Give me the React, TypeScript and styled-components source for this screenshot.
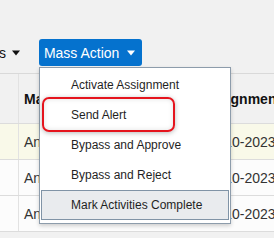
import React from 'react';
import styled, { createGlobalStyle } from 'styled-components';

const Global = createGlobalStyle`
  html, body { margin: 0; padding: 0; background: #f1f1f1; }
  body { font-family: "Liberation Sans", Arial, sans-serif; overflow: hidden; }
`;

const Page = styled.div`
  position: relative;
  width: 274px;
  height: 238px;
  overflow: hidden;
  background: #f1f1f1;
`;

const Toolbar = styled.div`
  display: flex;
  align-items: flex-start;
  gap: 19px;
  height: 73px;
  padding-top: 39px;
  box-sizing: border-box;
  margin-left: -40px;
`;

const TextMenuButton = styled.div`
  display: flex;
  align-items: center;
  gap: 6px;
  height: 27px;
  font-size: 14px;
  color: #111;
  white-space: nowrap;
`;

const PrimaryButton = styled.div`
  display: flex;
  align-items: center;
  gap: 8px;
  height: 27px;
  padding: 0 7px 0 5px;
  background: #0572ce;
  color: #fff;
  font-size: 14px;
  border-radius: 3px;
  white-space: nowrap;
`;

const Caret = ({ color }: { color: string }) => (
  <svg width="8" height="6" viewBox="0 0 8 6">
    <path d="M0 0.5 L8 0.5 L4 5.5 Z" fill={color} />
  </svg>
);

const Table = styled.div`
  display: flex;
  flex-direction: column;
  border-top: 1px solid #d9d9d9;
`;

const Row = styled.div<{ $bg: string; $h: number }>`
  display: grid;
  grid-template-columns: 19px 180px 1fr;
  height: ${(p) => p.$h}px;
  background: ${(p) => p.$bg};
  border-bottom: 1px solid #dcdcdc;
  box-sizing: border-box;
`;

const Cell = styled.div<{ $head?: boolean }>`
  display: flex;
  align-items: center;
  padding-left: ${(p) => (p.$head ? 2 : 5)}px;
  font-size: 14px;
  font-weight: ${(p) => (p.$head ? 700 : 400)};
  color: ${(p) => (p.$head ? '#111' : '#333')};
  white-space: nowrap;
  overflow: hidden;
`;

const FirstHeadCell = styled(Cell)`
  padding-left: 5px;
`;

const EdgeCell = styled.div`
  border-right: 1px solid #e2e2e2;
`;

const Menu = styled.div`
  position: absolute;
  left: 39px;
  top: 67px;
  width: 192px;
  box-sizing: border-box;
  background: #fff;
  border: 1px solid #8d9cab;
  padding: 2px 1px 3px;
  box-shadow: 0 2px 4px rgba(0, 0, 0, 0.18);
  display: flex;
  flex-direction: column;
`;

const MenuItem = styled.div<{ $active?: boolean }>`
  height: 30px;
  box-sizing: border-box;
  display: flex;
  align-items: center;
  padding-left: 29px;
  font-size: 12px;
  color: #1f1f1f;
  border: 1px solid ${(p) => (p.$active ? '#8093a6' : 'transparent')};
  background: ${(p) => (p.$active ? '#e9ebee' : 'transparent')};
  white-space: nowrap;
`;

const Annotation = styled.div`
  position: absolute;
  left: 42px;
  top: 97px;
  width: 133px;
  height: 35px;
  box-sizing: border-box;
  border: 2px solid #e5141d;
  border-radius: 7px;
  box-shadow: 0 1px 5px rgba(0, 0, 0, 0.28), inset 0 0 5px rgba(0, 0, 0, 0.12);
`;

const rows = [
  { name: 'Anderson, Mark', date: '10-10-2023', bg: '#f9f9e9' },
  { name: 'Andrews, Julia', date: '10-10-2023', bg: '#fcfcfc' },
  { name: 'Anton, Peter', date: '10-10-2023', bg: '#fcfcfc' },
];

const items = [
  'Activate Assignment',
  'Send Alert',
  'Bypass and Approve',
  'Bypass and Reject',
  'Mark Activities Complete',
];

export default function App() {
  return (
    <Page>
      <Global />
      <Toolbar>
        <TextMenuButton>
          Actions
          <Caret color="#111" />
        </TextMenuButton>
        <PrimaryButton>
          Mass Action
          <Caret color="#fff" />
        </PrimaryButton>
      </Toolbar>
      <Table>
        <Row $bg="#f1f1f1" $h={50}>
          <EdgeCell />
          <FirstHeadCell $head>Manager</FirstHeadCell>
          <Cell $head>Assignment Date</Cell>
        </Row>
        {rows.map((r) => (
          <Row key={r.name} $bg={r.bg} $h={36}>
            <EdgeCell />
            <Cell>{r.name}</Cell>
            <Cell>{r.date}</Cell>
          </Row>
        ))}
      </Table>
      <Menu>
        {items.map((t, i) => (
          <MenuItem key={t} $active={i === items.length - 1}>
            {t}
          </MenuItem>
        ))}
      </Menu>
      <Annotation />
    </Page>
  );
}
